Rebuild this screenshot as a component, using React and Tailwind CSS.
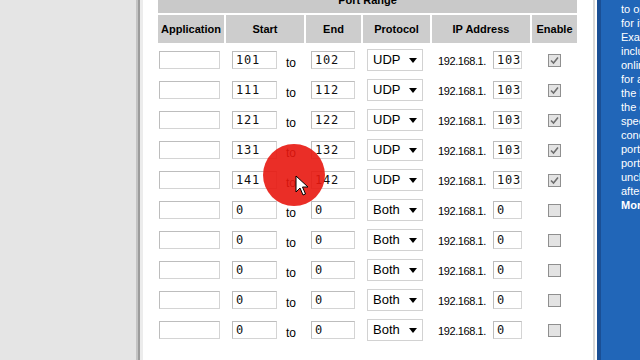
import React from "react";

const rows = [
  { start: "101", end: "102", proto: "UDP", ip: "103", on: true },
  { start: "111", end: "112", proto: "UDP", ip: "103", on: true },
  { start: "121", end: "122", proto: "UDP", ip: "103", on: true },
  { start: "131", end: "132", proto: "UDP", ip: "103", on: true },
  { start: "141", end: "142", proto: "UDP", ip: "103", on: true },
  { start: "0", end: "0", proto: "Both", ip: "0", on: false },
  { start: "0", end: "0", proto: "Both", ip: "0", on: false },
  { start: "0", end: "0", proto: "Both", ip: "0", on: false },
  { start: "0", end: "0", proto: "Both", ip: "0", on: false },
  { start: "0", end: "0", proto: "Both", ip: "0", on: false },
];

const helpLines = [
  "to open",
  "for it.",
  "Example",
  "include",
  "online",
  "for a",
  "the list",
  "the client",
  "specify",
  "conditions",
  "port",
  "ports",
  "unchecked",
  "after",
];

const cols = "grid grid-cols-[66px_78px_55px_67px_98px_45px] gap-x-[2px]";

// text box with the old sunken look
const Box = ({ value, className }) => (
  <div
    className={
      "h-[18px] bg-white border border-[#d4d4d4] border-t-[#bdbdbd] border-l-[#bdbdbd] pl-[3px] flex items-center text-[12px] tracking-[0.8px] text-[#111] " +
      className
    }
    style={{ fontFamily: '"DejaVu Sans Mono", monospace' }}
  >
    {value}
  </div>
);

const Check = ({ on }) => (
  <div className="w-[13px] h-[13px] border border-[#8f8f8f] bg-[#e3e3e3] flex items-center justify-center">
    {on ? (
      <svg width="9" height="9" viewBox="0 0 9 9">
        <path d="M1 4.5 L3.5 7 L8 1.5" stroke="#6d6d6d" strokeWidth="1.6" fill="none" />
      </svg>
    ) : null}
  </div>
);

export default function App() {
  return (
    <div
      className="w-[640px] h-[360px] overflow-hidden relative flex bg-white"
      style={{ fontFamily: '"Liberation Sans", Arial, sans-serif' }}
    >
      {/* desktop behind the window */}
      <div className="w-[136px] shrink-0 h-full bg-[#e5e5e5]" />
      <div className="w-[2px] shrink-0 h-full bg-[#c4c4c4]" />
      <div className="w-[2px] shrink-0 h-full bg-[#9c9c9c]" />
      <div className="w-[3px] shrink-0 h-full bg-[#ececec]" />

      {/* page */}
      <div className="w-[450px] shrink-0 h-full bg-white pl-[15px]">
        <div className="w-[419px] -mt-[12px]">
          <div className="h-[25px] bg-[#c9c9c9] flex items-center justify-center text-[11px] font-bold text-black">
            Port Range
          </div>
          <div className={cols + " mt-[2px] h-[28px] text-[11px] font-bold text-black"}>
            {["Application", "Start", "End", "Protocol", "IP Address", "Enable"].map((h) => (
              <div key={h} className="bg-[#cdcdcd] flex items-center justify-center">
                {h}
              </div>
            ))}
          </div>
          <div className="mt-[2px]">
            {rows.map((r, i) => (
              <div key={i} className={cols + " h-[30px] items-center"}>
                <div className="pl-[1px]">
                  <Box value="" className="w-[61px]" />
                </div>
                <div className="flex items-center pl-[6px]">
                  <Box value={r.start} className="w-[45px]" />
                  <span className="ml-[9px] mt-[5px] text-[12px] text-black">to</span>
                </div>
                <div className="pl-[5px]">
                  <Box value={r.end} className="w-[44px]" />
                </div>
                <div className="pl-[4px]">
                  <div className="w-[56px] h-[22px] border border-[#d2d2d2] bg-white flex items-center pl-[5px] text-[13px] text-black">
                    <span className="flex-1">{r.proto}</span>
                    <svg width="8" height="5" viewBox="0 0 8 5" className="mr-[5px]">
                      <path d="M0 0 H8 L4 5 Z" fill="#000" />
                    </svg>
                  </div>
                </div>
                <div className="flex items-center pl-[6px]">
                  <span className="text-[11px] tracking-[-0.4px] text-black mt-[3px] w-[55px]">192.168.1.</span>
                  <Box value={r.ip} className="w-[29px]" />
                </div>
                <div className="flex justify-center">
                  <Check on={r.on} />
                </div>
              </div>
            ))}
          </div>
        </div>
      </div>

      {/* help panel */}
      <div className="w-[2px] shrink-0 h-full bg-[#d9d9d9]" />
      <div className="w-[2px] shrink-0 h-full bg-white" />
      <div className="flex-1 min-w-0 overflow-hidden h-full bg-[#2166b8] flex">
        <div className="w-[4px] shrink-0 h-full bg-[#1a4f95]" />
        <div className="pl-[20px] pt-[2px] text-[11px] leading-[14px] text-white whitespace-nowrap">
          {helpLines.map((l, i) => (
            <div key={i}>{l}</div>
          ))}
          <div className="font-bold">More...</div>
        </div>
      </div>

      {/* click highlight and pointer */}
      <div className="absolute left-[263px] top-[144px] w-[62px] h-[62px] rounded-full bg-[#e8170f] opacity-90" />
      <svg className="absolute left-[295px] top-[175px]" width="14" height="22" viewBox="0 0 14 22">
        <path d="M1 1 L1 17 L5 13 L8 20 L10.5 19 L7.5 12 L13 12 Z" fill="#fff" stroke="#000" strokeWidth="1" />
      </svg>
    </div>
  );
}
